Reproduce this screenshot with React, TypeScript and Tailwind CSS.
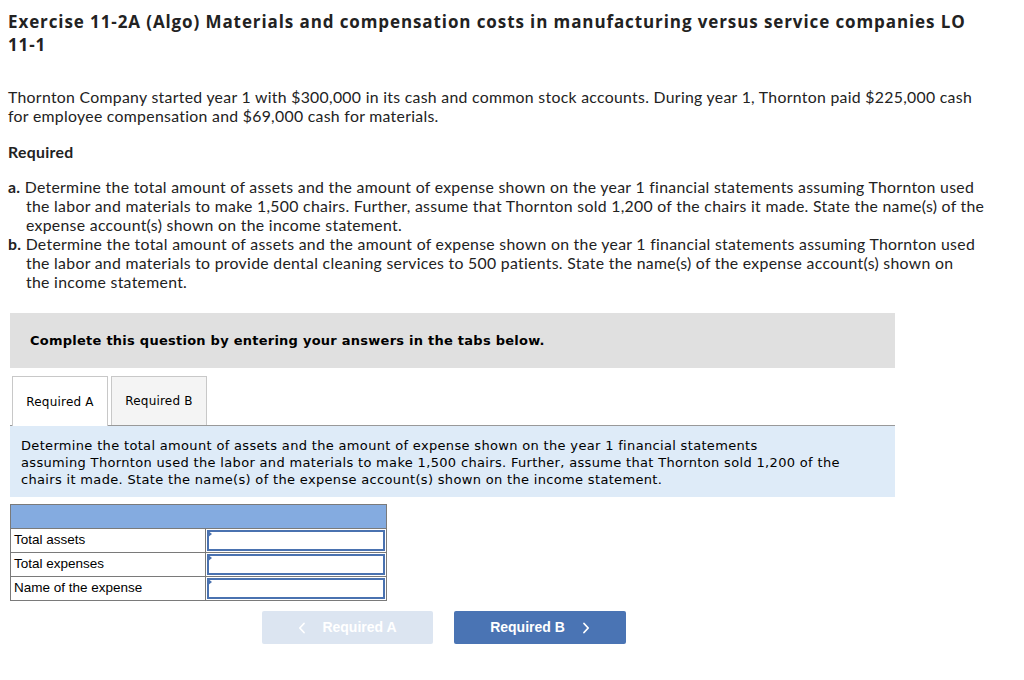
import React from "react";

const main = { fontFamily: "Lato, 'Open Sans', sans-serif" } as const;
const title = { fontFamily: "'Open Sans', Lato, sans-serif" } as const;
const verd = { fontFamily: "'DejaVu Sans', Verdana, sans-serif" } as const;
const arial = { fontFamily: "'Liberation Sans', Arial, sans-serif" } as const;

function InputCell() {
  return (
    <td className="relative border border-[#7a7a7a] p-0 h-[24px]">
      <div className="absolute inset-[1px] border-2 border-[#4a72b0] bg-white" />
      <div className="absolute left-[1px] top-[1px] w-0 h-0 border-t-[4px] border-b-[4px] border-l-[5px] border-t-transparent border-b-transparent border-l-[#4a72b0]" />
    </td>
  );
}

function Chevron({ dir }: { dir: "l" | "r" }) {
  return (
    <svg width="8" height="12" viewBox="0 0 8 12" fill="none" stroke="currentColor" strokeWidth="1.8" strokeLinecap="round" strokeLinejoin="round">
      {dir === "l" ? <path d="M6 1.5 1.8 6 6 10.5" /> : <path d="M2 1.5 6.2 6 2 10.5" />}
    </svg>
  );
}

export default function App() {
  return (
    <div className="w-[1024px] h-[680px] bg-white text-[#222] overflow-hidden" style={main}>
      <div className="px-[8px] pt-[10px] whitespace-nowrap">
        <h1 className="text-[17px] tracking-[0.9px] font-bold leading-[23px] text-[#222]" style={title}>
          Exercise 11-2A (Algo) Materials and compensation costs in manufacturing versus service companies LO
          <br />
          11-1
        </h1>
        <div className="text-[15.8px] tracking-[0.3px] leading-[19px]">
          <p className="mt-[31px]">
            Thornton Company started year 1 with $300,000 in its cash and common stock accounts. During year 1, Thornton paid $225,000 cash
            <br />
            for employee compensation and $69,000 cash for materials.
          </p>
          <p className="mt-[17px] font-bold">Required</p>
          <div className="mt-[16px]">
            <div className="pl-[18px] -indent-[18px]">
              <b>a.</b> Determine the total amount of assets and the amount of expense shown on the year 1 financial statements assuming Thornton used
              <br />
              the labor and materials to make 1,500 chairs. Further, assume that Thornton sold 1,200 of the chairs it made. State the name(s) of the
              <br />
              expense account(s) shown on the income statement.
            </div>
            <div className="pl-[18px] -indent-[18px]">
              <b>b.</b> Determine the total amount of assets and the amount of expense shown on the year 1 financial statements assuming Thornton used
              <br />
              the labor and materials to provide dental cleaning services to 500 patients. State the name(s) of the expense account(s) shown on
              <br />
              the income statement.
            </div>
          </div>
        </div>
      </div>

      <div className="ml-[10px] w-[885px]" style={verd}>
        <div className="mt-[22px] h-[55px] bg-[#e0e0e0] flex items-center px-[20px] text-[13px] tracking-[0.25px] font-bold text-black">
          Complete this question by entering your answers in the tabs below.
        </div>
        <div className="mt-[8px] flex items-end gap-[3px] pl-[2px] relative z-10">
          <div className="w-[96px] h-[50px] -mb-[1px] bg-white border border-[#c8c8c8] border-b-0 flex items-center justify-center text-[12px] tracking-[0.2px] text-black">
            Required A
          </div>
          <div className="w-[96px] h-[49px] bg-[#f4f4f4] border border-[#c8c8c8] border-b-0 flex items-center justify-center text-[12px] tracking-[0.2px] text-black">
            Required B
          </div>
        </div>
        <div className="bg-[#deebf8] border-t border-[#999] px-[11px] pt-[11px] pb-[9px] text-[13px] tracking-[0.33px] leading-[17px] text-black">
          <div className="whitespace-nowrap">
            Determine the total amount of assets and the amount of expense shown on the year 1 financial statements
            <br />
            assuming Thornton used the labor and materials to make 1,500 chairs. Further, assume that Thornton sold 1,200 of the
            <br />
            chairs it made. State the name(s) of the expense account(s) shown on the income statement.
          </div>
        </div>
      </div>

      <table className="ml-[10px] mt-[7px] border-collapse w-[377px] text-[13.5px] text-black" style={arial}>
        <tbody>
          <tr>
            <td colSpan={2} className="h-[24px] bg-[#84abe0] border border-[#7a7a7a]" />
          </tr>
          <tr>
            <td className="w-[195px] h-[24px] border border-[#7a7a7a] px-[3px]">Total assets</td>
            <InputCell />
          </tr>
          <tr>
            <td className="h-[24px] border border-[#7a7a7a] px-[3px]">Total expenses</td>
            <InputCell />
          </tr>
          <tr>
            <td className="h-[24px] border border-[#7a7a7a] px-[3px]">Name of the expense</td>
            <InputCell />
          </tr>
        </tbody>
      </table>

      <div className="mt-[10px] ml-[262px] flex gap-[21px]" style={arial}>
        <div className="w-[171px] h-[33px] rounded-[2px] bg-[#dce5f1] flex items-center justify-center gap-[16px] text-white text-[14px] font-bold">
          <Chevron dir="l" />
          <span>Required A</span>
        </div>
        <div className="w-[172px] h-[33px] rounded-[2px] bg-[#4a74b4] flex items-center justify-center gap-[17px] text-white text-[14px] font-bold">
          <span>Required B</span>
          <Chevron dir="r" />
        </div>
      </div>
    </div>
  );
}
